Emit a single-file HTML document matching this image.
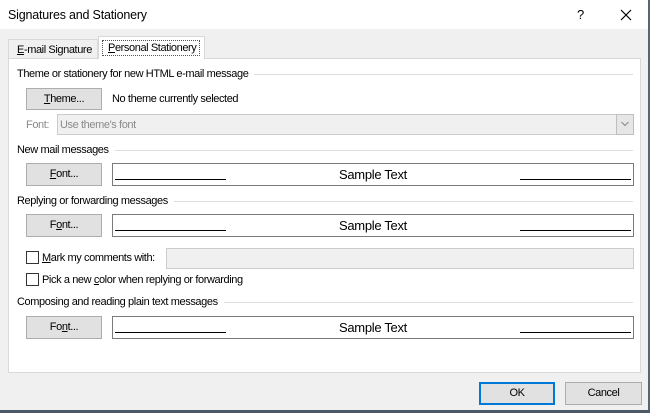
<!DOCTYPE html>
<html><head><meta charset="utf-8"><style>
*{margin:0;padding:0;box-sizing:border-box}
body{width:650px;height:413px;background:#f0f0f0;font-family:"Liberation Sans",sans-serif;font-size:11px;letter-spacing:-0.4px;color:#000;position:relative;overflow:hidden}
.a{position:absolute}
.btn{position:absolute;background:#e1e1e1;border:1px solid #adadad;text-align:center;line-height:20px;font-size:11px}
.hd{position:absolute;left:17px;white-space:nowrap;background:#fff;padding-right:6px}
.ln{position:absolute;height:1px;background:#dcdcdc;right:17px}
.box{position:absolute;left:112px;width:522px;height:23px;border:1px solid #7a7a7a;background:#fff}
.box .u1{position:absolute;left:2px;width:111px;top:15px;height:1px;background:#000}
.box .u2{position:absolute;right:2px;width:111px;top:15px;height:1px;background:#000}
.box .t{position:absolute;left:0;right:0;text-align:center;top:3px;font-size:13px;letter-spacing:-0.3px}
.cb{position:absolute;left:26px;width:13px;height:13px;border:1px solid #333;background:#fff}
u{text-decoration:underline}
</style></head><body>
<div class="a" style="left:0;top:0;width:650px;height:29px;background:#fff"></div>
<div class="a" style="left:8px;top:8px;font-size:12.5px;letter-spacing:-0.2px">Signatures and Stationery</div>
<div class="a" style="left:577px;top:7px;font-size:13px">?</div>
<svg class="a" style="left:620px;top:9px" width="12" height="12"><path d="M1 1L11 11M11 1L1 11" stroke="#000" stroke-width="1.2"/></svg>
<div class="a" style="right:0;top:0;width:2px;height:413px;background:#5a6570"></div>
<div class="a" style="left:0;bottom:0;width:650px;height:3px;background:#4b5a66"></div>
<!-- tabs -->
<div class="a" style="left:8px;top:39px;width:90px;height:20px;border:1px solid #d9d9d9;border-bottom:none;background:#f0f0f0"></div>
<div class="a" style="left:17px;top:44px"><u>E</u>-mail Signature</div>
<div class="a" style="left:8px;top:58px;width:633px;height:315px;background:#fff;border:1px solid #d9d9d9"></div>
<div class="a" style="left:98px;top:36px;width:107px;height:23px;background:#fff;border:1px solid #d9d9d9;border-bottom:none"></div>
<div class="a" style="left:102px;top:40px;width:98px;height:16px;border:1px dotted #555"></div>
<div class="a" style="left:108px;top:42px"><u>P</u>ersonal Stationery</div>
<!-- section 1 -->
<div class="ln" style="left:17px;top:74px;width:616px"></div>
<div class="hd" style="top:68px">Theme or stationery for new HTML e-mail message</div>
<div class="btn" style="left:26px;top:88px;width:76px;height:22px"><u>T</u>heme...</div>
<div class="a" style="left:112px;top:93px">No theme currently selected</div>
<div class="a" style="left:26px;top:119px;color:#8a8a8a">Font:</div>
<div class="a" style="left:57px;top:114px;width:577px;height:21px;background:#f0f0f0;border:1px solid #ccc"></div>
<div class="a" style="left:60px;top:119px;color:#8a8a8a">Use theme's font</div>
<div class="a" style="left:616px;top:114px;width:18px;height:21px;border:1px solid #bfbfbf;background:#e6e6e6"></div>
<svg class="a" style="left:621px;top:121px" width="8" height="6"><path d="M0.5 1L4 4.5L7.5 1" stroke="#888" fill="none"/></svg>
<!-- new mail -->
<div class="ln" style="left:17px;top:150px;width:616px"></div>
<div class="hd" style="top:144px">New mail messages</div>
<div class="btn" style="left:26px;top:163px;width:76px;height:23px"><u>F</u>ont...</div>
<div class="box" style="top:163px"><div class="u1"></div><div class="t">Sample Text</div><div class="u2"></div></div>
<!-- replying -->
<div class="ln" style="left:17px;top:201px;width:616px"></div>
<div class="hd" style="top:195px">Replying or forwarding messages</div>
<div class="btn" style="left:26px;top:214px;width:76px;height:23px">F<u>o</u>nt...</div>
<div class="box" style="top:214px"><div class="u1"></div><div class="t">Sample Text</div><div class="u2"></div></div>
<div class="cb" style="top:251px"></div>
<div class="a" style="left:42px;top:252px"><u>M</u>ark my comments with:</div>
<div class="a" style="left:166px;top:248px;width:468px;height:21px;background:#f0f0f0;border:1px solid #ccc"></div>
<div class="cb" style="top:273px"></div>
<div class="a" style="left:42px;top:274px">Pick a new <u>c</u>olor when replying or forwarding</div>
<!-- plain -->
<div class="ln" style="left:17px;top:302px;width:616px"></div>
<div class="hd" style="top:296px">Composing and reading plain text messages</div>
<div class="btn" style="left:26px;top:316px;width:76px;height:23px">Fo<u>n</u>t...</div>
<div class="box" style="top:316px"><div class="u1"></div><div class="t">Sample Text</div><div class="u2"></div></div>
<!-- bottom buttons -->
<div class="btn" style="left:479px;top:382px;width:76px;height:23px;border:2px solid #0078d7;line-height:19px">OK</div>
<div class="btn" style="left:565px;top:382px;width:77px;height:23px">Cancel</div>
</body></html>
